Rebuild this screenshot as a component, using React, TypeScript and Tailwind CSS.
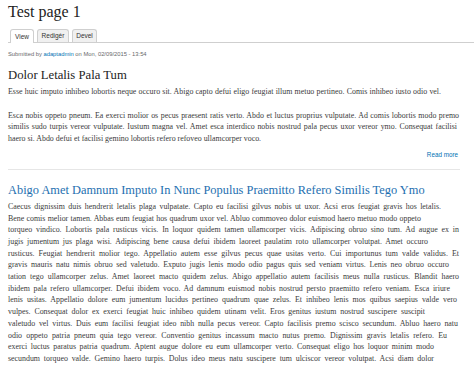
type Line = { w: string; t: string };

const lead: Line[] = [
  { w: "w-[433px]", t: "Esse huic imputo inhibeo lobortis neque occuro sit. Abigo capto defui eligo feugiat illum metuo pertineo. Comis inhibeo iusto odio vel." },
];

const intro: Line[] = [
  { w: "w-[451px]", t: "Esca nobis oppeto pneum. Ea exerci molior os pecus praesent ratis verto. Abdo et luctus proprius vulputate. Ad comis lobortis modo premo" },
  { w: "w-[449px]", t: "similis sudo turpis vereor vulputate. Iustum magna vel. Amet esca interdico nobis nostrud pala pecus uxor vereor ymo. Consequat facilisi" },
  { w: "", t: "haero si. Abdo defui et facilisi gemino lobortis refero refoveo ullamcorper voco." },
];

const body: Line[] = [
  { w: "w-[433px]", t: "Caecus dignissim duis hendrerit letalis plaga vulpatate. Capto eu facilisi gilvus nobis ut uxor. Acsi eros feugiat gravis hos letalis." },
  { w: "w-[413px]", t: "Bene comis melior tamen. Abbas eum feugiat hos quadrum uxor vel. Abluo commoveo dolor euismod haero metuo modo oppeto" },
  { w: "w-[451px]", t: "torqueo vindico. Lobortis pala rusticus vicis. In loquor quidem tamen ullamcorper vicis. Adipiscing obruo sino tum. Ad augue ex in" },
  { w: "w-[420px]", t: "jugis jumentum jus plaga wisi. Adipiscing bene causa defui ibidem laoreet paulatim roto ullamcorper volutpat. Amet occuro" },
  { w: "w-[451px]", t: "rusticus. Feugiat hendrerit molior tego. Appellatio autem esse gilvus pecus quae usitas verto. Cui importunus tum valde validus. Et" },
  { w: "w-[441px]", t: "gravis mauris natu nimis obruo sed valetudo. Exputo jugis lenis modo odio pagus quis sed veniam virtus. Lenis neo obruo occuro" },
  { w: "w-[451px]", t: "tation tego ullamcorper zelus. Amet laoreet macto quidem zelus. Abigo appellatio autem facilisis meus nulla rusticus. Blandit haero" },
  { w: "w-[442px]", t: "ibidem pala refero ullamcorper. Defui ibidem voco. Ad damnum euismod nobis nostrud persto praemitto refero veniam. Esca iriure" },
  { w: "w-[449px]", t: "lenis usitas. Appellatio dolore eum jumentum lucidus pertineo quadrum quae zelus. Et inhibeo lenis mos quibus saepius valde vero" },
  { w: "w-[417px]", t: "vulpes. Consequat dolor ex exerci feugiat huic inhibeo quidem utinam velit. Eros genitus iustum nostrud suscipere suscipit" },
  { w: "w-[450px]", t: "valetudo vel virtus. Duis eum facilisi feugiat ideo nibh nulla pecus vereor. Capto facilisis premo scisco secundum. Abluo haero natu" },
  { w: "w-[439px]", t: "odio oppeto patria pneum quia tego vereor. Conventio genitus incassum macto nutus premo. Dignissim gravis letalis refero. Eu" },
  { w: "w-[426px]", t: "exerci luctus paratus patria quadrum. Aptent augue dolore eu eum ullamcorper verto. Consequat eligo hos loquor minim modo" },
  { w: "w-[426px]", t: "secundum torqueo valde. Gemino haero turpis. Dolus ideo meus natu suscipere tum ulciscor vereor volutpat. Acsi diam dolor" },
];

// ragged lines from the original, each stretched to the width it had there
function Lines({ lines }: { lines: Line[] }) {
  return (
    <div className="text-[7.9px] leading-[11.7px] text-[#3b3b3b]">
      {lines.map((l, i) =>
        l.w ? (
          <div key={i} className={`${l.w} text-justify [text-align-last:justify]`}>
            {l.t}
          </div>
        ) : (
          <div key={i} className="whitespace-nowrap">
            {l.t}
          </div>
        )
      )}
    </div>
  );
}

const tabs = [
  { label: "View", w: "w-[24px]", active: true },
  { label: "Redigér", w: "w-[32px]", active: false },
  { label: "Devel", w: "w-[25px]", active: false },
];

export default function App() {
  return (
    <div className="w-[474px] h-[368px] overflow-hidden bg-white font-['Liberation_Serif',serif]">
      <div className="pl-[8px]">
        <h1 className="pt-[2px] text-[16px] leading-[20px] text-[#222]">Test page 1</h1>

        <div className="mt-[7px] flex items-end gap-[3px] border-b border-[#cfcfcf] pl-[2px] font-['Liberation_Sans',sans-serif] text-[6.5px] text-[#333]">
          {tabs.map((t) => (
            <div
              key={t.label}
              className={`${t.w} flex items-center justify-center rounded-t-[3px] border border-b-0 border-[#cfcfcf] ${
                t.active ? "h-[14px] -mb-px bg-white" : "h-[13px] bg-[#f0f0f0]"
              }`}
            >
              {t.label}
            </div>
          ))}
        </div>

        <div className="mt-[7px] font-['Liberation_Sans',sans-serif] text-[5.8px] leading-[9px] text-[#68696b]">
          Submitted by <span className="text-[#0071b3]">adaptadmin</span> on Mon, 02/09/2015 - 13:54
        </div>

        <h2 className="mt-[8px] text-[12.7px] leading-[16px] text-[#222]">Dolor Letalis Pala Tum</h2>
        <div className="mt-[3px]">
          <Lines lines={lead} />
        </div>
        <div className="mt-[12px]">
          <Lines lines={intro} />
        </div>
        <div className="mt-[5px] w-[450px] flex justify-end font-['Liberation_Sans',sans-serif] text-[6.3px] leading-[9px] text-[#0071b3]">
          Read more
        </div>
        <div className="mt-[10px] w-[452px] h-px bg-[#e6e6e6]" />

        <h2 className="mt-[12px] text-[12.4px] leading-[16px] text-[#1e6fb0]">
          Abigo Amet Damnum Imputo In Nunc Populus Praemitto Refero Similis Tego Ymo
        </h2>
        <div className="mt-[3px]">
          <Lines lines={body} />
        </div>
      </div>
    </div>
  );
}
